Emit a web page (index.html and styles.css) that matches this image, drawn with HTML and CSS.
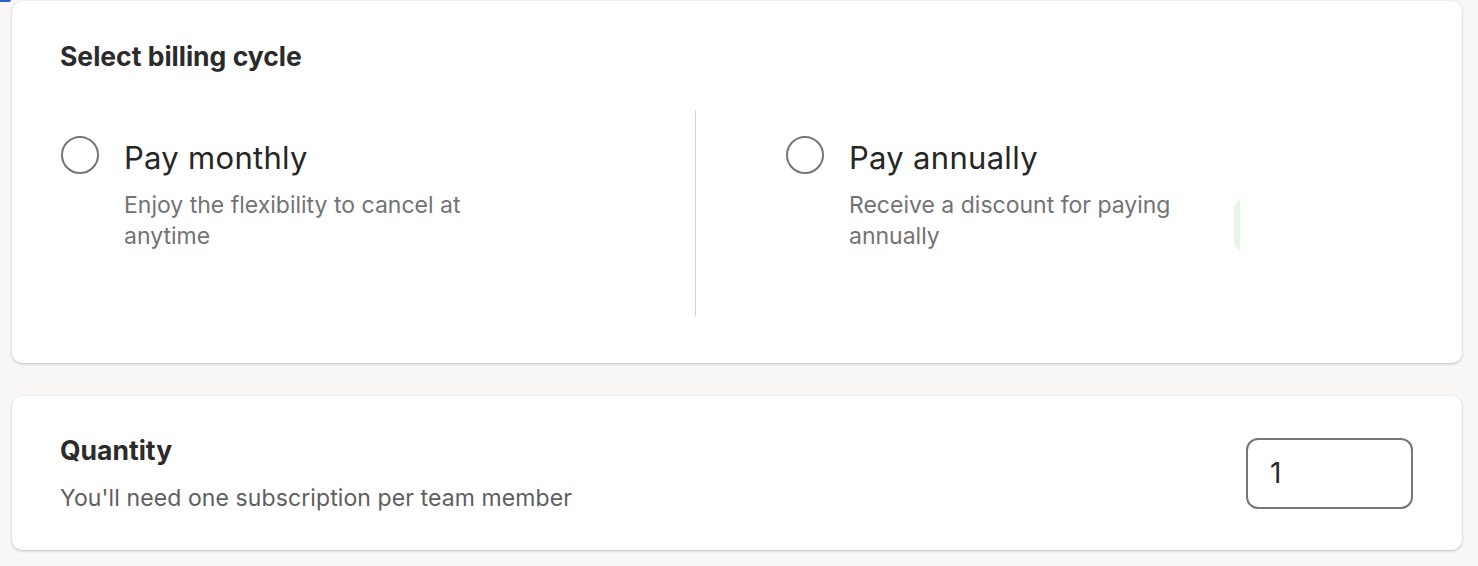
FILE: index.html
```html
<!DOCTYPE html>
<html lang="en">
<head>
<meta charset="utf-8">
<title>Billing</title>
<link rel="stylesheet" href="styles.css">
</head>
<body>
<div class="page">
  <span class="focus-mark"></span>
  <section class="card billing">
    <h2 class="card-title">Select billing cycle</h2>
    <div class="options">
      <label class="option option-left">
        <span class="radio"></span>
        <span class="option-body">
          <span class="option-title">Pay monthly</span>
          <span class="desc-row">
            <span class="option-desc">Enjoy the flexibility to cancel at anytime</span>
          </span>
        </span>
      </label>
      <div class="divider"></div>
      <label class="option option-right">
        <span class="radio"></span>
        <span class="option-body">
          <span class="option-title">Pay annually</span>
          <span class="desc-row">
            <span class="option-desc">Receive a discount for paying annually</span>
            <span class="badge"></span>
          </span>
        </span>
      </label>
    </div>
  </section>
  <section class="card quantity">
    <div class="quantity-text">
      <h2 class="card-title">Quantity</h2>
      <p class="quantity-desc">You'll need one subscription per team member</p>
    </div>
    <div class="qty-input">1</div>
  </section>
</div>
</body>
</html>
```
FILE: styles.css
```css
* { box-sizing: border-box; }
html, body { margin: 0; padding: 0; }
body {
  background: #f8f7f5;
  font-family: Inter, "Open Sans", sans-serif;
  color: #2b2b2b;
  height: 566px;
  overflow: hidden;
}
.page {
  position: relative;
  padding: 1px 16px 0 12px;
  display: flex;
  flex-direction: column;
  gap: 33px;
}
.focus-mark {
  position: absolute;
  left: 0;
  top: 0;
  width: 11px;
  height: 2px;
  background: #2e5fc7;
  border-radius: 0 0 2px 0;
}
.card {
  background: #fff;
  border-radius: 10px;
  box-shadow: 0 1px 3px rgba(0,0,0,0.22), 0 0 1px rgba(0,0,0,0.08);
}
.card-title {
  margin: 0;
  font-size: 26.5px;
  line-height: 32px;
  font-weight: 700;
  color: #2b2b2b;
}
.billing {
  height: 362px;
  padding: 39px 48px 0 48px;
}
.options {
  display: flex;
  margin-top: 38px;
  height: 206px;
}
.option {
  display: flex;
  align-items: flex-start;
  gap: 25px;
  padding-top: 26px;
  cursor: pointer;
}
.option-left {
  width: 635px;
  padding-left: 1px;
}
.divider {
  width: 1px;
  background: #d4d4d4;
  flex: none;
}
.option-right {
  width: 544px;
  padding-left: 90px;
  overflow: hidden;
}
.radio {
  flex: none;
  width: 38px;
  height: 38px;
  border-radius: 50%;
  border: 2px solid #767676;
  background: #fff;
}
.option-body {
  display: flex;
  flex-direction: column;
  gap: 13px;
  padding-top: 3px;
}
.option-title {
  font-size: 31px;
  line-height: 38px;
  letter-spacing: 0.3px;
  color: #262626;
}
.desc-row {
  display: flex;
  align-items: flex-start;
}
.option-desc {
  flex: none;
  width: 385px;
  font-size: 23px;
  line-height: 31px;
  color: #737373;
}
.badge {
  flex: none;
  margin-top: 9px;
  width: 120px;
  height: 52px;
  border-radius: 10px;
  background: #e6f6e6;
}
.quantity {
  height: 154px;
  padding: 0 49px 0 48px;
  display: flex;
  align-items: center;
  justify-content: space-between;
}
.quantity-text {
  display: flex;
  flex-direction: column;
  gap: 17px;
  padding-top: 1px;
}
.quantity-desc {
  margin: 0;
  font-size: 23px;
  line-height: 30px;
  letter-spacing: 0.1px;
  color: #5e5e5e;
}
.qty-input {
  width: 167px;
  height: 71px;
  border: 2px solid #777;
  border-radius: 12px;
  padding-left: 22px;
  font-size: 28px;
  line-height: 67px;
  color: #2b2b2b;
}
```
